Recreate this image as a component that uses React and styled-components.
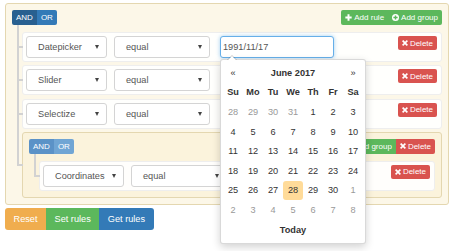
import React from "react";
import styled, { createGlobalStyle, css } from "styled-components";

const GlobalStyle = createGlobalStyle`
  html, body { margin: 0; padding: 0; background: #fff; }
  body {
    min-height: 251px;
    font-family: "Liberation Sans", Arial, sans-serif;
    color: #555;
  }
`;

const Page = styled.div`
  position: relative;
  width: 444px;
  padding: 3px 0 0 5px;
`;

const Group = styled.div`
  background: ${(p) => (p.$nested ? "#fbf3dc" : "#fcf7e8")};
  border: 1px solid #e4d7b0;
  border-radius: 3px;
  padding: 6px;
`;

const GroupHeader = styled.div`
  display: flex;
  justify-content: space-between;
  align-items: center;
  height: 15px;
`;

const BtnGroup = styled.div`
  display: flex;
`;

const SmallBtn = styled.span`
  display: inline-flex;
  align-items: center;
  gap: 2px;
  height: 15px;
  padding: 0 4px;
  box-sizing: border-box;
  font-size: 8px;
  color: #fff;
  background: ${(p) => p.$bg};
  &:first-child { border-radius: 2px 0 0 2px; }
  &:last-child { border-radius: 0 2px 2px 0; }
`;

const RulesList = styled.div`
  display: flex;
  flex-direction: column;
  gap: 3.33px;
  margin: 7px 0 0 10px;
`;

const line = css`
  content: "";
  position: absolute;
  left: -5px;
  width: 4px;
  border-left: 2px solid #d2d2d2;
`;

const Item = styled.div`
  position: relative;
  &::before {
    ${line}
    top: -4px;
    height: calc(50% + 3px);
    border-bottom: 2px solid #d2d2d2;
  }
  &:first-child::before {
    top: -7px;
    height: calc(50% + 6px);
  }
  &::after {
    ${line}
    top: 50%;
    height: calc(50% + 4px);
  }
  &:last-child::after { display: none; }
`;

const Rule = styled.div`
  display: flex;
  align-items: flex-start;
  background: rgba(255, 255, 255, 0.9);
  border: 1px solid #eee;
  border-radius: 3px;
  padding: 3px 4px 3px 3px;
`;

const Fields = styled.div`
  display: flex;
  gap: 7px;
`;

const Select = styled.div`
  display: flex;
  align-items: center;
  justify-content: space-between;
  width: ${(p) => p.$w}px;
  height: 22px;
  box-sizing: border-box;
  padding: 0 7px 0 11px;
  border: 1px solid #d4d4d4;
  border-radius: 3px;
  background: #fff;
  font-size: 9.2px;
  color: #555;
`;

const Caret = styled.span`
  width: 0;
  height: 0;
  border-left: 2px solid transparent;
  border-right: 2px solid transparent;
  border-top: 4px solid #444;
`;

const Input = styled.div`
  display: flex;
  align-items: center;
  width: 114px;
  height: 22px;
  box-sizing: border-box;
  margin-left: 3px;
  padding: 0 2px;
  border: 1px solid #66afe9;
  border-radius: 3px;
  box-shadow: 0 0 4px rgba(102, 175, 233, 0.6);
  background: #fff;
  font-size: 9.2px;
  color: #555;
`;

const DeleteBtn = styled.span`
  display: inline-flex;
  align-items: center;
  gap: 2px;
  margin-left: auto;
  height: 14px;
  padding: 0 4px;
  box-sizing: border-box;
  border-radius: 2px;
  background: #d9534f;
  color: #fff;
  font-size: 8px;
`;

const Footer = styled.div`
  display: flex;
  margin-top: 3px;
`;

const BigBtn = styled.span`
  display: inline-flex;
  align-items: center;
  height: 22px;
  padding: 0 8.5px;
  font-size: 9.2px;
  color: #fff;
  background: ${(p) => p.$bg};
  &:first-child { border-radius: 3px 0 0 3px; }
  &:last-child { border-radius: 0 3px 3px 0; }
`;

const Picker = styled.div`
  position: absolute;
  left: 220px;
  top: 59px;
  width: 146px;
  box-sizing: border-box;
  padding: 3px 2px 4px;
  background: #fff;
  border: 1px solid rgba(0, 0, 0, 0.15);
  border-radius: 3px;
  box-shadow: 0 3px 8px rgba(0, 0, 0, 0.18);
  z-index: 5;
  &::before {
    content: "";
    position: absolute;
    top: -5px;
    left: 6px;
    border-left: 5px solid transparent;
    border-right: 5px solid transparent;
    border-bottom: 5px solid rgba(0, 0, 0, 0.2);
  }
  &::after {
    content: "";
    position: absolute;
    top: -4px;
    left: 7px;
    border-left: 4px solid transparent;
    border-right: 4px solid transparent;
    border-bottom: 4px solid #fff;
  }
`;

const Calendar = styled.div`
  display: grid;
  grid-template-columns: repeat(7, 20px);
  grid-auto-rows: 19.6px;
  font-size: 9.2px;
  color: #333;
`;

const Cell = styled.div`
  display: flex;
  align-items: center;
  justify-content: center;
  grid-column: span ${(p) => p.$span || 1};
  border-radius: 3px;
  color: ${(p) => (p.$muted ? "#999" : "#333")};
  font-weight: ${(p) => (p.$bold ? "bold" : "normal")};
  background: ${(p) => (p.$today ? "#ffdb99" : "transparent")};
`;

const XIcon = () => (
  <svg width="6" height="6" viewBox="0 0 10 10">
    <path d="M2 2L8 8M8 2L2 8" stroke="#fff" strokeWidth="2.8" strokeLinecap="square" />
  </svg>
);

const PlusIcon = () => (
  <svg width="7" height="7" viewBox="0 0 10 10">
    <path d="M5 0.5V9.5M0.5 5H9.5" stroke="#fff" strokeWidth="2.8" />
  </svg>
);

const PlusSignIcon = () => (
  <svg width="7" height="7" viewBox="0 0 10 10">
    <circle cx="5" cy="5" r="5" fill="#fff" />
    <path d="M5 2V8M2 5H8" stroke="#5cb85c" strokeWidth="2" />
  </svg>
);

const Conditions = ({ nested }) => (
  <BtnGroup>
    <SmallBtn $bg={nested ? "#5b92c7" : "#286090"}>AND</SmallBtn>
    <SmallBtn $bg={nested ? "#70a5d4" : "#337ab7"}>OR</SmallBtn>
  </BtnGroup>
);

const Delete = () => (
  <DeleteBtn>
    <XIcon /> Delete
  </DeleteBtn>
);

const RuleRow = ({ field, value }) => (
  <Item>
    <Rule>
      <Fields>
        <Select $w={81}>
          {field}
          <Caret />
        </Select>
        <Select $w={96}>
          equal
          <Caret />
        </Select>
        {value && <Input>{value}</Input>}
      </Fields>
      <Delete />
    </Rule>
  </Item>
);

const weeks = [
  [[28, 1], [29, 1], [30, 1], [31, 1], [1], [2], [3]],
  [[4], [5], [6], [7], [8], [9], [10]],
  [[11], [12], [13], [14], [15], [16], [17]],
  [[18], [19], [20], [21], [22], [23], [24]],
  [[25], [26], [27], [28, 0, 1], [29], [30], [1, 1]],
  [[2, 1], [3, 1], [4, 1], [5, 1], [6, 1], [7, 1], [8, 1]],
];

const DatePicker = () => (
  <Picker>
    <Calendar>
      <Cell>«</Cell>
      <Cell $span={5} $bold>June 2017</Cell>
      <Cell>»</Cell>
      {["Su", "Mo", "Tu", "We", "Th", "Fr", "Sa"].map((d) => (
        <Cell key={d} $bold>{d}</Cell>
      ))}
      {weeks.flat().map(([n, muted, today], i) => (
        <Cell key={i} $muted={muted} $today={today}>{n}</Cell>
      ))}
      <Cell $span={7} $bold>Today</Cell>
    </Calendar>
  </Picker>
);

export default function App() {
  return (
    <Page>
      <GlobalStyle />
      <Group>
        <GroupHeader>
          <Conditions />
          <BtnGroup>
            <SmallBtn $bg="#5cb85c"><PlusIcon /> Add rule</SmallBtn>
            <SmallBtn $bg="#5cb85c"><PlusSignIcon /> Add group</SmallBtn>
          </BtnGroup>
        </GroupHeader>
        <RulesList>
          <RuleRow field="Datepicker" value="1991/11/17" />
          <RuleRow field="Slider" />
          <RuleRow field="Selectize" />
          <Item>
            <Group $nested>
              <GroupHeader>
                <Conditions nested />
                <BtnGroup>
                  <SmallBtn $bg="#5cb85c"><PlusIcon /> Add rule</SmallBtn>
                  <SmallBtn $bg="#5cb85c"><PlusSignIcon /> Add group</SmallBtn>
                  <SmallBtn $bg="#d9534f"><XIcon /> Delete</SmallBtn>
                </BtnGroup>
              </GroupHeader>
              <RulesList>
                <RuleRow field="Coordinates" />
              </RulesList>
            </Group>
          </Item>
        </RulesList>
      </Group>
      <Footer>
        <BigBtn $bg="#f0ad4e">Reset</BigBtn>
        <BigBtn $bg="#5cb85c">Set rules</BigBtn>
        <BigBtn $bg="#337ab7">Get rules</BigBtn>
      </Footer>
      <DatePicker />
    </Page>
  );
}
